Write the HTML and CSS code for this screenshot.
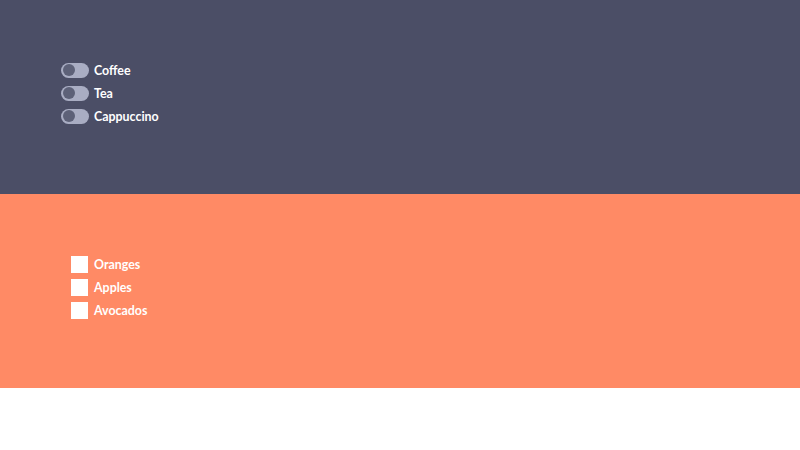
FILE: index.html
```html
<!DOCTYPE html>
<html>
<head>
<meta charset="utf-8">
<link rel="stylesheet" href="styles.css">
</head>
<body>
<section class="panel dark">
  <ul class="list">
    <li class="item"><span class="toggle"><span class="knob"></span></span><span class="label">Coffee</span></li>
    <li class="item"><span class="toggle"><span class="knob"></span></span><span class="label">Tea</span></li>
    <li class="item"><span class="toggle"><span class="knob"></span></span><span class="label">Cappuccino</span></li>
  </ul>
</section>
<section class="panel orange">
  <ul class="list checks">
    <li class="item"><span class="box"></span><span class="label">Oranges</span></li>
    <li class="item"><span class="box"></span><span class="label">Apples</span></li>
    <li class="item"><span class="box"></span><span class="label">Avocados</span></li>
  </ul>
</section>
</body>
</html>
```
FILE: styles.css
```css
html, body { margin: 0; padding: 0; background: #fff; }
body { font-family: "Lato", "Open Sans", sans-serif; }
.panel { height: 194px; box-sizing: border-box; }
.dark { background: #4b4e66; padding: 61px 0 0 61px; }
.orange { background: #ff8a65; padding: 61px 0 0 71px; }
.list { list-style: none; margin: 0; padding: 0; display: flex; flex-direction: column; gap: 5px; }
.item { display: flex; align-items: center; height: 18px; gap: 5px; }
.label { color: #fff; font-weight: 700; font-size: 12.4px; }
.toggle { width: 28px; height: 15px; border-radius: 8px; background: #a9adc3; display: flex; align-items: center; padding-left: 1px; box-sizing: border-box; }
.knob { width: 12px; height: 12px; border-radius: 50%; background: #5d6178; margin-left: 1px; }
.box { width: 17px; height: 17px; background: #fff; margin-right: 1px; }
```
